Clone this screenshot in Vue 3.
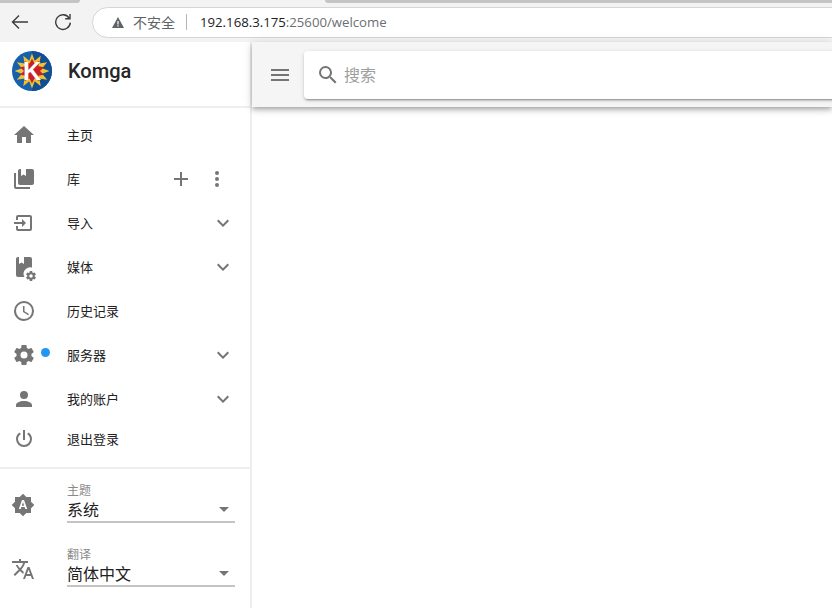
<script setup>
const chev = 'M7.41,8.58L12,13.17L16.59,8.58L18,10L12,16L6,10L7.41,8.58Z'
const plus = 'M19,13H13V19H11V13H5V11H11V5H13V11H19V13Z'
const dots = 'M12,16A2,2 0 0,1 14,18A2,2 0 0,1 12,20A2,2 0 0,1 10,18A2,2 0 0,1 12,16M12,10A2,2 0 0,1 14,12A2,2 0 0,1 12,14A2,2 0 0,1 10,12A2,2 0 0,1 12,10M12,4A2,2 0 0,1 14,6A2,2 0 0,1 12,8A2,2 0 0,1 10,6A2,2 0 0,1 12,4Z'
const cog = 'M12,15.5A3.5,3.5 0 0,1 8.5,12A3.5,3.5 0 0,1 12,8.5A3.5,3.5 0 0,1 15.5,12A3.5,3.5 0 0,1 12,15.5M19.43,12.97C19.47,12.65 19.5,12.33 19.5,12C19.5,11.67 19.47,11.34 19.43,11L21.54,9.37C21.73,9.22 21.78,8.95 21.66,8.73L19.66,5.27C19.54,5.05 19.27,4.96 19.05,5.05L16.56,6.05C16.04,5.66 15.5,5.32 14.87,5.07L14.5,2.42C14.46,2.18 14.25,2 14,2H10C9.75,2 9.54,2.18 9.5,2.42L9.13,5.07C8.5,5.32 7.96,5.66 7.44,6.05L4.95,5.05C4.73,4.96 4.46,5.05 4.34,5.27L2.34,8.73C2.21,8.95 2.27,9.22 2.46,9.37L4.57,11C4.53,11.34 4.5,11.67 4.5,12C4.5,12.33 4.53,12.65 4.57,12.97L2.46,14.63C2.27,14.78 2.21,15.05 2.34,15.27L4.34,18.73C4.46,18.95 4.73,19.03 4.95,18.95L7.44,17.94C7.96,18.34 8.5,18.68 9.13,18.93L9.5,21.58C9.54,21.82 9.75,22 10,22H14C14.25,22 14.46,21.82 14.5,21.58L14.87,18.93C15.5,18.67 16.04,18.34 16.56,17.94L19.05,18.95C19.27,19.03 19.54,18.95 19.66,18.73L21.66,15.27C21.78,15.05 21.73,14.78 21.54,14.63L19.43,12.97Z'
const items = [
  { label: '主页', icon: 'M10,20V14H14V20H19V12H22L12,3L2,12H5V20H10Z' },
  { label: '库', icon: 'M22,4V16A2,2 0 0,1 20,18H8A2,2 0 0,1 6,16V4A2,2 0 0,1 8,2H9V9L11.5,7.5L14,9V2H20A2,2 0 0,1 22,4M4,6H2V20A2,2 0 0,0 4,22H18V20H4V6Z', actions: [plus, dots] },
  { label: '导入', icon: 'M14,12L10,8V11H2V13H10V16M20,18V6C20,4.89 19.1,4 18,4H6A2,2 0 0,0 4,6V9H6V6H18V18H6V15H4V18A2,2 0 0,0 6,20H18A2,2 0 0,0 20,18Z', chevron: true },
  { label: '媒体', icon: 'M12.5,22H6A2,2 0 0,1 4,20V4A2,2 0 0,1 6,2H7V9L9.5,7.5L12,9V2H18A2,2 0 0,1 20,4V12.5A6.5,6.5 0 0,0 12.5,22Z', badgeCog: true, chevron: true },
  { label: '历史记录', icon: 'M12,20A8,8 0 0,0 20,12A8,8 0 0,0 12,4A8,8 0 0,0 4,12A8,8 0 0,0 12,20M12,2A10,10 0 0,1 22,12A10,10 0 0,1 12,22C6.47,22 2,17.5 2,12A10,10 0 0,1 12,2M12.5,7V12.25L17,14.92L16.25,16.15L11,13V7H12.5Z' },
  { label: '服务器', icon: cog, dot: true, chevron: true },
  { label: '我的账户', icon: 'M12,4A4,4 0 0,1 16,8A4,4 0 0,1 12,12A4,4 0 0,1 8,8A4,4 0 0,1 12,4M12,14C16.42,14 20,15.79 20,18V20H4V18C4,15.79 7.58,14 12,14Z', chevron: true },
  { label: '退出登录', short: true, icon: 'M16.56,5.44L15.11,6.89C16.84,7.94 18,9.83 18,12A6,6 0 0,1 12,18A6,6 0 0,1 6,12C6,9.83 7.16,7.94 8.88,6.88L7.44,5.44C5.36,6.88 4,9.28 4,12A8,8 0 0,0 12,20A8,8 0 0,0 20,12C20,9.28 18.64,6.88 16.56,5.44M13,3H11V13H13' }
]
const selects = [
  { label: '主题', value: '系统', icon: 'M14.3,16L13.6,14H10.4L9.7,16H7.8L11,7H13L16.2,16H14.3M20,8.69V4H15.31L12,0.69L8.69,4H4V8.69L0.69,12L4,15.31V20H8.69L12,23.31L15.31,20H20V15.31L23.31,12L20,8.69M10.85,12.65H13.15L12,9L10.85,12.65Z' },
  { label: '翻译', value: '简体中文', icon: 'M12.87,15.07L10.33,12.56L10.36,12.53C12.1,10.59 13.34,8.36 14.07,6H17V4H10V2H8V4H1V6H12.17C11.5,7.92 10.44,9.75 9,11.35C8.07,10.32 7.3,9.19 6.69,8H4.69C5.42,9.63 6.42,11.17 7.67,12.56L2.58,17.58L4,19L9,14L12.11,17.11L12.87,15.07M18.5,10H16.5L12,22H14L15.12,19H19.87L21,22H23L18.5,10M15.88,17L17.5,12.67L19.12,17H15.88Z' }
]
function star(n, R, r, cx = 20, cy = 20) {
  const pts = []
  for (let i = 0; i < n * 2; i++) {
    const a = (Math.PI * i) / n - Math.PI / 2
    const d = i % 2 ? r : R
    pts.push(`${(cx + d * Math.cos(a)).toFixed(2)},${(cy + d * Math.sin(a)).toFixed(2)}`)
  }
  return pts.join(' ')
}
const outerStar = star(12, 17.5, 10.5)
const innerStar = star(10, 12.5, 8)
</script>

<template>
  <div class="page">
    <div class="tabs">
      <span class="tab-left"></span>
      <span class="tab-right"></span>
    </div>
    <header class="chrome">
      <svg class="nav-back" viewBox="0 0 18 16" width="18" height="16"><path d="M17 8H2M8 1.5L1.5 8L8 14.5" fill="none" stroke="#3c3c3c" stroke-width="1.4"/></svg>
      <svg class="nav-reload" viewBox="0 0 18 18" width="18" height="18"><path d="M15.2 5.2A7.3 7.3 0 1 0 16.3 9.6" fill="none" stroke="#3c3c3c" stroke-width="1.4"/><path d="M16 1V5.8H11.2" fill="none" stroke="#3c3c3c" stroke-width="1.4"/></svg>
      <div class="omnibox">
        <svg class="warn" viewBox="0 0 12 11" width="12" height="11"><path d="M6 0L12 11H0Z" fill="#5f6368"/><path d="M5.4 4H6.6V7.5H5.4ZM5.4 8.3H6.6V9.5H5.4Z" fill="#fff"/></svg>
        <span class="insecure">不安全</span>
        <span class="sep"></span>
        <span class="url">192.168.3.175<span class="url-dim">:25600/welcome</span></span>
      </div>
    </header>

    <div class="body">
      <aside class="drawer">
        <div class="brand">
          <svg class="logo" viewBox="0 0 40 40" width="40" height="40">
            <circle cx="20" cy="20" r="20" fill="#1660ad"/>
            <path d="M20 0A20 20 0 0 1 40 20A20 20 0 0 1 20 40Z" fill="#114f92"/>
            <polygon :points="outerStar" fill="#efc22e"/>
            <polygon :points="innerStar" fill="#c8202a"/>
            <text x="20" y="28.5" text-anchor="middle" class="logo-k">K</text>
          </svg>
          <span class="brand-name">Komga</span>
        </div>
        <hr class="rule" />
        <nav class="nav">
          <div v-for="item in items" :key="item.label" class="row" :class="{ short: item.short }">
            <span class="icon-wrap">
              <svg viewBox="0 0 24 24" width="24" height="24"><path :d="item.icon" fill="#757575"/></svg>
              <svg v-if="item.badgeCog" class="mini-cog" viewBox="0 0 24 24" width="12" height="12"><path :d="cog" fill="#757575"/></svg>
              <span v-if="item.dot" class="dot"></span>
            </span>
            <span class="row-label">{{ item.label }}</span>
            <span v-if="item.actions" class="actions">
              <svg v-for="a in item.actions" :key="a" viewBox="0 0 24 24" width="24" height="24"><path :d="a" fill="#757575"/></svg>
            </span>
            <svg v-if="item.chevron" class="chev" viewBox="0 0 24 24" width="24" height="24"><path :d="chev" fill="#757575"/></svg>
          </div>
        </nav>
        <hr class="rule" />
        <div class="selects">
          <div v-for="s in selects" :key="s.label" class="select-row">
            <svg class="select-icon" viewBox="0 0 24 24" width="24" height="24"><path :d="s.icon" fill="#757575"/></svg>
            <div class="field">
              <span class="field-label">{{ s.label }}</span>
              <div class="field-value">
                <span>{{ s.value }}</span>
                <svg viewBox="0 0 24 24" width="24" height="24"><path d="M7,10L12,15L17,10H7Z" fill="#757575"/></svg>
              </div>
            </div>
          </div>
        </div>
      </aside>

      <main class="main">
        <div class="appbar">
          <svg viewBox="0 0 24 24" width="24" height="24"><path d="M3,6H21V8H3V6M3,11H21V13H3V11M3,16H21V18H3V16Z" fill="#757575"/></svg>
          <div class="search">
            <svg viewBox="0 0 24 24" width="24" height="24"><path d="M9.5,3A6.5,6.5 0 0,1 16,9.5C16,11.11 15.41,12.59 14.44,13.73L14.71,14H15.5L20.5,19L19,20.5L14,15.5V14.71L13.73,14.44C12.59,15.41 11.11,16 9.5,16A6.5,6.5 0 0,1 3,9.5A6.5,6.5 0 0,1 9.5,3M9.5,5C7,5 5,7 5,9.5C5,12 7,14 9.5,14C12,14 14,12 14,9.5C14,7 12,5 9.5,5Z" fill="#757575"/></svg>
            <span class="search-text">搜索</span>
          </div>
        </div>
      </main>
    </div>
  </div>
</template>

<style scoped>
.page {
  width: 832px;
  height: 608px;
  overflow: hidden;
  display: flex;
  flex-direction: column;
  background: #fff;
  font-family: Roboto, "Noto Sans CJK SC", sans-serif;
  color: #212121;
}
.tabs {
  height: 3px;
  flex: none;
  display: flex;
  justify-content: space-between;
  background: #f3f3f3;
}
.tab-left { width: 80px; background: #c4c4c4; border-radius: 0 0 4px 0; }
.tab-right { width: 507px; background: #c4c4c4; border-radius: 0 0 0 4px; }
.chrome {
  height: 39px;
  flex: none;
  display: flex;
  align-items: center;
  background: #f3f3f3;
  padding: 0 0 1px 11px;
  box-sizing: border-box;
}
.nav-back { margin-right: 25px; }
.nav-reload { margin-right: 20px; }
.omnibox {
  flex: 1;
  height: 31px;
  margin-right: -40px;
  background: #fff;
  border: 1px solid #d6d6d6;
  border-radius: 16px;
  display: flex;
  align-items: center;
  padding-left: 19px;
  font-size: 14px;
  box-sizing: border-box;
}
.warn { margin-right: 9px; }
.insecure { color: #5f6368; }
.sep { width: 1px; height: 16px; background: #b5b5b5; margin: 0 13px 0 11px; }
.url { color: #202124; font-family: "Open Sans", sans-serif; font-size: 13.2px; }
.url-dim { color: #6b6f73; }

.body { flex: 1; display: flex; min-height: 0; }
.drawer {
  width: 252px;
  flex: none;
  background: #fff;
  border-right: 2px solid #eeeeee;
  box-sizing: border-box;
  display: flex;
  flex-direction: column;
}
.brand {
  height: 64px;
  flex: none;
  display: flex;
  align-items: center;
  padding: 0 0 6px 12px;
  box-sizing: border-box;
}
.logo { flex: none; margin-right: 16px; }
.logo-k { font: 900 25px "Liberation Sans", sans-serif; fill: #fff; }
.brand-name { font-size: 20px; font-weight: 500; color: #262626; }
.rule { margin: 0; border: 0; border-top: 2px solid #eeeeee; flex: none; }
.nav { padding-top: 5px; padding-bottom: 10px; }
.row { height: 44px; display: flex; align-items: center; padding: 0 16px 0 11.5px; }
.row.short { height: 36px; }
.icon-wrap { position: relative; width: 24px; height: 24px; flex: none; margin-right: 31.5px; }
.icon-wrap svg { display: block; }
.mini-cog { position: absolute; right: -1px; bottom: -3px; background: #fff; border-radius: 50%; }
.dot {
  position: absolute;
  top: 5px;
  right: -14px;
  width: 9px;
  height: 9px;
  border-radius: 50%;
  background: #2196f3;
}
.row-label { flex: 1; font-size: 13px; padding-bottom: 2px; }
.actions { display: flex; gap: 12px; margin-right: 5px; }
.chev { flex: none; margin-right: -1px; }
.selects { display: flex; flex-direction: column; gap: 25px; padding-top: 15px; }
.select-row { display: flex; align-items: center; padding: 0 15px 0 11px; }
.select-icon { margin: 2px 32px 0 0; flex: none; }
.field { flex: 1; display: flex; flex-direction: column; border-bottom: 2px solid #c4c4c4; }
.field-label { font-size: 12px; line-height: 14px; color: #8a8a8a; }
.field-value {
  display: flex;
  align-items: center;
  justify-content: space-between;
  height: 22px;
  font-size: 16px;
  padding-bottom: 1px;
}
.field-value svg { flex: none; margin-right: -1px; }

.main { flex: 1; min-width: 0; background: #fff; }
.appbar {
  height: 65px;
  display: flex;
  align-items: center;
  padding-left: 16px;
  background: #f5f5f5;
  box-shadow: 0 2px 4px -1px rgba(0,0,0,.2), 0 4px 5px rgba(0,0,0,.14), 0 1px 10px rgba(0,0,0,.12);
}
.search {
  flex: 1;
  height: 48px;
  margin-left: 12px;
  margin-right: -8px;
  background: #fff;
  border-radius: 4px;
  display: flex;
  align-items: center;
  padding-left: 12px;
  box-shadow: 0 3px 1px -2px rgba(0,0,0,.2), 0 2px 2px rgba(0,0,0,.14), 0 1px 5px rgba(0,0,0,.12);
}
.search-text { font-size: 16px; color: #9e9e9e; margin-left: 4px; padding-bottom: 2px; }
</style>
